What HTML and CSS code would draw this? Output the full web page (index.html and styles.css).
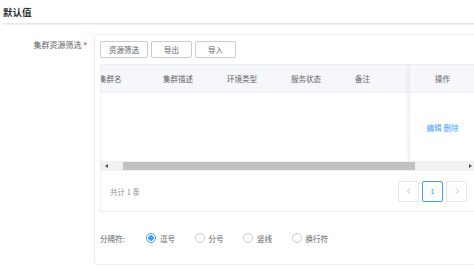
FILE: index.html
```html
<!DOCTYPE html>
<html lang="zh">
<head>
<meta charset="utf-8">
<link rel="stylesheet" href="styles.css">
</head>
<body>
<div class="page">
  <div class="title">默认值</div>
  <div class="divider"></div>
  <div class="form-row">
    <div class="label">集群资源筛选<span class="req">*</span></div>
    <div class="card">
      <div class="toolbar">
        <button class="btn btn-a">资源筛选</button>
        <button class="btn btn-b">导出</button>
        <button class="btn btn-b">导入</button>
      </div>
      <div class="table">
        <div class="table-main">
          <div class="cols">
            <div class="row head">
              <div class="cell">集群名</div>
              <div class="cell">集群描述</div>
              <div class="cell">环境类型</div>
              <div class="cell">服务状态</div>
              <div class="cell">备注</div>
            </div>
            <div class="row body"></div>
          </div>
          <div class="fixed-col">
            <div class="fixed-head">操作</div>
            <div class="fixed-body"><span class="link">编辑</span> <span class="link">删除</span></div>
          </div>
        </div>
        <div class="scrollbar">
          <div class="sb-btn sb-left"></div>
          <div class="sb-track"><div class="sb-thumb"></div></div>
          <div class="sb-btn sb-right"></div>
        </div>
        <div class="footer">
          <div class="total">共计 1 条</div>
          <div class="pager">
            <span class="pg pg-disabled"><svg width="6" height="8" viewBox="0 0 6 8"><path d="M4.5 1 L1.5 4 L4.5 7" fill="none" stroke="#c0c4cc" stroke-width="1"/></svg></span>
            <span class="pg pg-active">1</span>
            <span class="pg pg-disabled"><svg width="6" height="8" viewBox="0 0 6 8"><path d="M1.5 1 L4.5 4 L1.5 7" fill="none" stroke="#c0c4cc" stroke-width="1"/></svg></span>
          </div>
        </div>
      </div>
      <div class="radio-row">
        <span class="radio-label">分隔符:</span>
        <span class="radio checked"><span class="dot"></span><span class="rtext">逗号</span></span>
        <span class="radio"><span class="dot"></span><span class="rtext">分号</span></span>
        <span class="radio"><span class="dot"></span><span class="rtext">竖线</span></span>
        <span class="radio"><span class="dot"></span><span class="rtext">换行符</span></span>
      </div>
    </div>
  </div>
</div>
</body>
</html>
```
FILE: styles.css
```css
html, body {
  margin: 0;
  padding: 0;
  overflow: hidden;
  background: #fff;
  width: 474px;
  height: 278px;
}
.page {
  font-family: "Noto Sans CJK SC", "Noto Sans", sans-serif;
  font-size: 8px;
  color: #606266;
  padding-top: 5px;
  width: 474px;
  overflow: hidden;
}
.title {
  font-size: 9.5px;
  font-weight: bold;
  color: #303133;
  line-height: 14px;
  padding-left: 3px;
}
.divider {
  margin: 4px 0 0 3px;
  height: 1px;
  background: #e6e6e6;
  border-bottom: 1px solid #f2f2f2;
}
.form-row {
  display: flex;
  margin-top: 9px;
}
.label {
  flex: none;
  width: 94px;
  text-align: right;
  padding-top: 5px;
  padding-right: 7px;
  line-height: 12px;
  color: #606266;
  box-sizing: border-box;
}
.req {
  color: #f56c6c;
  margin-left: 2px;
  font-size: 9px;
  font-family: "Liberation Sans", sans-serif;
  font-weight: bold;
}
.card {
  flex: none;
  width: 400px;
  border: 1px solid #ebeef5;
  border-radius: 3px;
  padding: 6px 0 0 5px;
  height: 231px;
  box-sizing: border-box;
}
.toolbar {
  display: flex;
  gap: 3px;
  height: 17px;
}
.btn {
  font-family: inherit;
  font-size: 7.5px;
  color: #606266;
  background: #fff;
  border: 1px solid #c9ccd3;
  border-radius: 2px;
  height: 17px;
  padding: 0;
  line-height: 15px;
}
.btn-a { width: 48px; }
.btn-b { width: 41px; }
.table {
  margin-top: 6px;
  width: 376px;
  border: 1px solid #ebeef5;
  box-sizing: border-box;
}
.table-main {
  position: relative;
  overflow: hidden;
  height: 96px;
}
.cols {
  margin-left: -12px;
}
.row {
  display: flex;
}
.row.head {
  height: 27px;
  background: #f5f7fa;
  border-bottom: 1px solid #ebeef5;
  align-items: center;
}
.cell {
  width: 64px;
  flex: none;
  padding-left: 10px;
  box-sizing: border-box;
  font-size: 7.5px;
  color: #606266;
  white-space: nowrap;
}
.row.body {
  height: 68px;
}
.fixed-col {
  position: absolute;
  top: 0;
  right: 0;
  width: 65px;
  height: 96px;
  background: #fff;
  border-left: 1px solid #ebeef5;
  box-shadow: -2px 0 4px rgba(0, 0, 0, 0.05);
  display: flex;
  flex-direction: column;
}
.fixed-head {
  height: 27px;
  background: #f5f7fa;
  border-bottom: 1px solid #ebeef5;
  display: flex;
  align-items: center;
  justify-content: center;
  font-size: 7.5px;
}
.fixed-body {
  flex: 1;
  display: flex;
  align-items: center;
  justify-content: center;
  gap: 2px;
  font-size: 7.5px;
}
.link {
  color: #409eff;
}
.scrollbar {
  display: flex;
  height: 10px;
  background: #f1f1f1;
}
.sb-btn {
  width: 10px;
  flex: none;
  position: relative;
}
.sb-left::after, .sb-right::after {
  content: "";
  position: absolute;
  top: 3px;
  width: 0;
  height: 0;
  border-top: 2px solid transparent;
  border-bottom: 2px solid transparent;
}
.sb-left::after {
  left: 4px;
  border-right: 3px solid #505050;
}
.sb-right::after {
  left: 4px;
  border-left: 3px solid #505050;
}
.sb-track {
  flex: 1;
  padding-left: 12px;
  padding-right: 50px;
  display: flex;
  align-items: center;
}
.sb-thumb {
  flex: 1;
  height: 8px;
  background: #c1c1c1;
}
.footer {
  height: 40px;
  display: flex;
  align-items: center;
  justify-content: space-between;
  padding: 0 8px 0 9px;
}
.total {
  font-size: 7.5px;
  color: #909399;
}
.pager {
  display: flex;
  gap: 3px;
}
.pg {
  width: 21px;
  height: 21px;
  box-sizing: border-box;
  border: 1px solid #e4e7ed;
  border-radius: 2px;
  display: flex;
  align-items: center;
  justify-content: center;
  font-size: 8px;
  font-family: "Liberation Sans", sans-serif;
}
.pg-active {
  border-color: #409eff;
  color: #409eff;
}
.radio-row {
  display: flex;
  align-items: center;
  margin-top: 20px;
  height: 12px;
}
.radio-label {
  width: 46px;
  font-size: 7.5px;
}
.radio {
  display: flex;
  align-items: center;
  margin-right: 19.5px;
}
.dot {
  width: 10px;
  height: 10px;
  box-sizing: border-box;
  border: 1px solid #c9ccd3;
  border-radius: 50%;
  margin-right: 4px;
  background: #fff;
}
.radio.checked .dot {
  border-color: #409eff;
  background: radial-gradient(circle, #409eff 0, #409eff 2.5px, #fff 3px);
}
.rtext {
  font-size: 7.5px;
  color: #606266;
}
```
